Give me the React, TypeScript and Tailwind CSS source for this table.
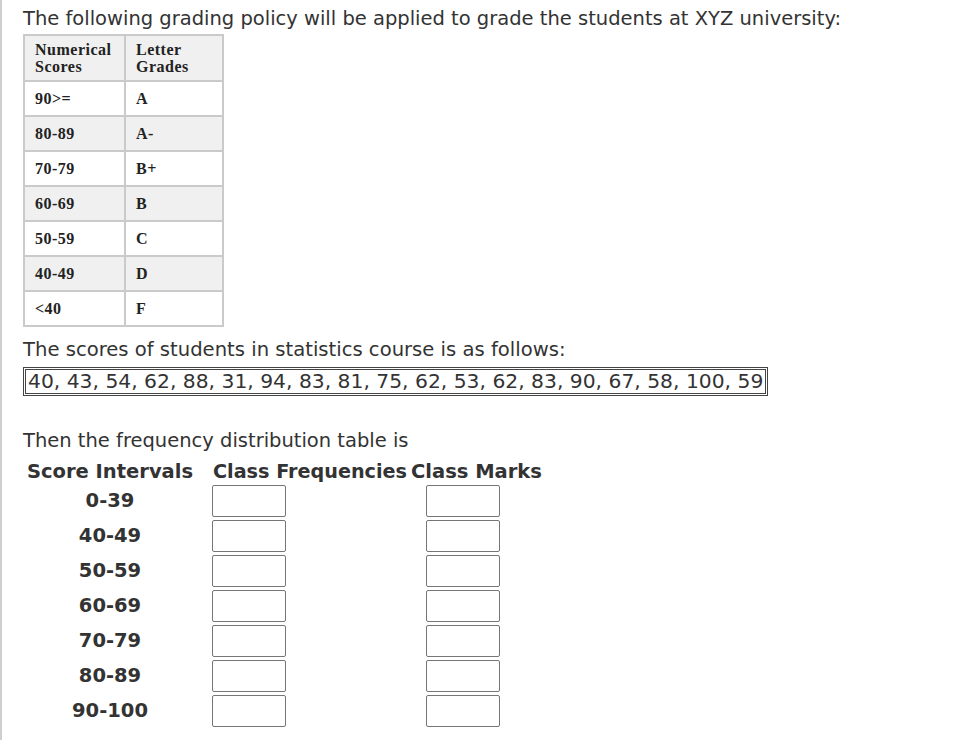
import React from "react";

const grades = [
  ["90>=", "A"],
  ["80-89", "A-"],
  ["70-79", "B+"],
  ["60-69", "B"],
  ["50-59", "C"],
  ["40-49", "D"],
  ["<40", "F"],
];

const intervals = ["0-39", "40-49", "50-59", "60-69", "70-79", "80-89", "90-100"];

function AnswerBox() {
  return (
    <input
      type="text"
      className="h-[32px] w-[74px] rounded-[2px] border border-[#767676] bg-white"
    />
  );
}

export default function App() {
  return (
    <div className="min-h-[740px] border-l-2 border-[#cfcfcf] bg-white pl-[21px] pt-[7px] font-['DejaVu_Sans',Verdana,sans-serif] text-[#333]">
      <p className="text-[19.5px] leading-[24px]">
        The following grading policy will be applied to grade the students at XYZ university:
      </p>

      <table className="mt-[3px] w-[201px] border-collapse border border-[#c4c4c4] font-['Liberation_Serif',serif] text-[16px] font-bold tracking-[0.5px] text-[#222]">
        <thead>
          <tr className="h-[46px] bg-[#f0f0f0]">
            <th className="w-[101px] border-2 border-[#cacaca] pl-[10px] text-left align-middle leading-[17px]">
              Numerical
              <br />
              Scores
            </th>
            <th className="border-2 border-[#cacaca] pl-[10px] text-left align-middle leading-[17px]">
              Letter
              <br />
              Grades
            </th>
          </tr>
        </thead>
        <tbody>
          {grades.map(([score, letter], i) => (
            <tr key={score} className={i % 2 === 1 ? "h-[35px] bg-[#f0f0f0]" : "h-[35px] bg-white"}>
              <td className="border-2 border-[#cacaca] pl-[10px] leading-[18px]">{score}</td>
              <td className="border-2 border-[#cacaca] pl-[10px] leading-[18px]">{letter}</td>
            </tr>
          ))}
        </tbody>
      </table>

      <p className="mt-[12px] text-[19.6px] leading-[22px]">
        The scores of students in statistics course is as follows:
      </p>
      <div className="mt-[6px] inline-block whitespace-nowrap border-[3px] border-double border-[#444] px-[2px] text-[20.3px] leading-[23px]">
        40, 43, 54, 62, 88, 31, 94, 83, 81, 75, 62, 53, 62, 83, 90, 67, 58, 100, 59
      </div>

      <p className="mt-[34px] text-[19.5px] leading-[22px]">Then the frequency distribution table is</p>

      <div className="mt-[9px] grid grid-cols-[174px_211px_150px] items-center whitespace-nowrap text-[19.5px] font-bold leading-[22px]">
        <div className="text-center">Score Intervals</div>
        <div className="pl-[16px] text-[19.2px]">Class Frequencies</div>
        <div className="pl-[3px]">Class Marks</div>
      </div>

      <div className="mt-[2px] flex flex-col gap-[3px]">
        {intervals.map((iv) => (
          <div key={iv} className="grid grid-cols-[174px_211px_150px] items-center">
            <div className="text-center text-[19.5px] font-bold">{iv}</div>
            <div className="pl-[15px]">
              <AnswerBox />
            </div>
            <div className="pl-[18px]">
              <AnswerBox />
            </div>
          </div>
        ))}
      </div>
    </div>
  );
}
